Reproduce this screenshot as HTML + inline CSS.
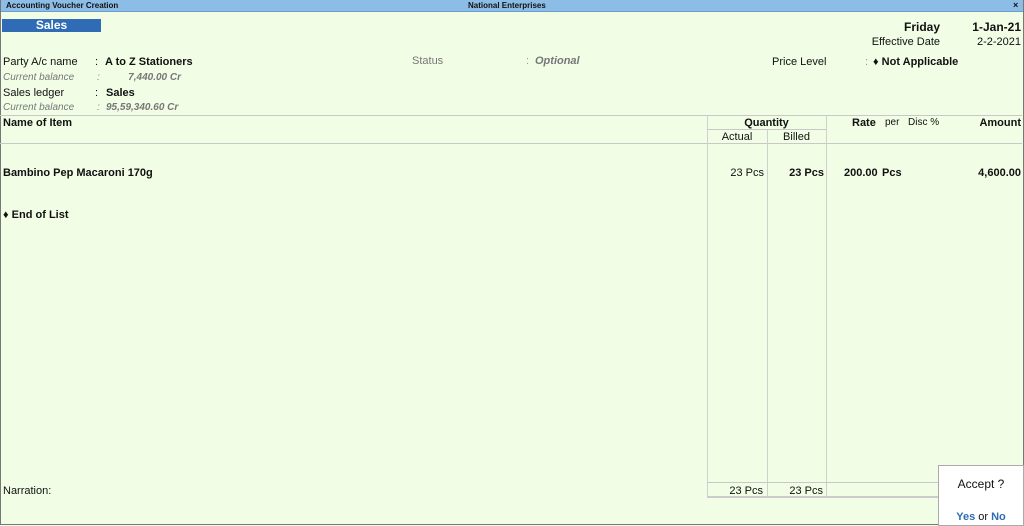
<!DOCTYPE html>
<html><head><style>
body{margin:0;width:1024px;height:526px;overflow:hidden;background:#f2fde6;font-family:"Liberation Sans",sans-serif;font-size:11px;color:#111;position:relative}
.a{position:absolute;white-space:nowrap}
.b{font-weight:bold}
.g{color:#777;font-style:italic}
.r{text-align:right}
.hl{position:absolute;height:1px;background:#c8c8c8}
.vl{position:absolute;width:1px;background:#d0d0d0}
</style></head><body>
<div class="a" style="left:0;top:0;width:1024px;height:11px;background:#8cbde6;border-bottom:1px solid #6a9ccc"></div>
<div class="a" style="left:0;top:0;width:1022px;height:524px;border:1px solid #777;border-top:none"></div>
<div class="a b" style="left:6px;top:0;font-size:8px;line-height:11px">Accounting Voucher Creation</div>
<div class="a b" style="left:468px;top:0;font-size:8px;line-height:11px">National Enterprises</div>
<div class="a b" style="left:1013px;top:0;font-size:9px;line-height:11px">×</div>
<div class="a b" style="left:2px;top:19px;width:99px;height:13px;background:#2f6cb5;color:#fff;text-align:center;font-size:12px;line-height:13px">Sales</div>
<div class="a b r" style="left:860px;top:20px;width:80px;font-size:12px">Friday</div>
<div class="a b r" style="left:960px;top:20px;width:61px;font-size:12px">1-Jan-21</div>
<div class="a r" style="left:860px;top:36px;width:80px">Effective Date</div>
<div class="a r" style="left:960px;top:36px;width:61px">2-2-2021</div>
<div class="a" style="left:3px;top:56px;font-size:11px">Party A/c name</div>
<div class="a" style="left:95px;top:56px">:</div>
<div class="a b" style="left:105px;top:56px">A to Z Stationers</div>
<div class="a g" style="left:3px;top:72px;font-size:10px">Current balance</div>
<div class="a g" style="left:97px;top:72px;font-size:10px">:</div>
<div class="a g b r" style="left:105px;top:72px;width:76px;font-size:10px">7,440.00 Cr</div>
<div class="a" style="left:3px;top:87px">Sales ledger</div>
<div class="a" style="left:95px;top:87px">:</div>
<div class="a b" style="left:106px;top:87px">Sales</div>
<div class="a g" style="left:3px;top:102px;font-size:10px">Current balance</div>
<div class="a g" style="left:97px;top:102px;font-size:10px">:</div>
<div class="a g b" style="left:106px;top:102px;font-size:10px">95,59,340.60 Cr</div>
<div class="a" style="left:412px;top:55px;color:#777">Status</div>
<div class="a" style="left:526px;top:55px;color:#999">:</div>
<div class="a b g" style="left:535px;top:55px">Optional</div>
<div class="a" style="left:772px;top:56px">Price Level</div>
<div class="a" style="left:865px;top:56px;color:#999">:</div>
<div class="a b" style="left:873px;top:56px">♦ Not Applicable</div>
<div class="hl" style="left:0;top:115px;width:1022px"></div>
<div class="hl" style="left:0;top:143px;width:1022px"></div>
<div class="hl" style="left:707px;top:129px;width:119px"></div>
<div class="vl" style="left:707px;top:115px;height:382px"></div>
<div class="vl" style="left:767px;top:129px;height:368px"></div>
<div class="vl" style="left:826px;top:115px;height:382px"></div>
<div class="hl" style="left:707px;top:482px;width:232px"></div>
<div class="hl" style="left:707px;top:496px;width:232px;height:2px;background:#ccc"></div>
<div class="a b" style="left:3px;top:117px">Name of Item</div>
<div class="a b" style="left:707px;top:117px;width:119px;text-align:center">Quantity</div>
<div class="a" style="left:707px;top:131px;width:60px;text-align:center">Actual</div>
<div class="a" style="left:767px;top:131px;width:59px;text-align:center">Billed</div>
<div class="a b" style="left:852px;top:117px">Rate</div>
<div class="a" style="left:885px;top:117px;font-size:10px">per</div>
<div class="a" style="left:908px;top:117px;font-size:10px">Disc %</div>
<div class="a b r" style="left:950px;top:117px;width:71px">Amount</div>
<div class="a b" style="left:3px;top:167px">Bambino Pep Macaroni 170g</div>
<div class="a r" style="left:707px;top:167px;width:57px">23 Pcs</div>
<div class="a b r" style="left:767px;top:167px;width:57px">23 Pcs</div>
<div class="a b" style="left:844px;top:167px">200.00</div>
<div class="a b" style="left:882px;top:167px">Pcs</div>
<div class="a b r" style="left:950px;top:167px;width:71px">4,600.00</div>
<div class="a b" style="left:3px;top:209px">♦ End of List</div>
<div class="a" style="left:3px;top:485px">Narration:</div>
<div class="a r" style="left:707px;top:485px;width:56px">23 Pcs</div>
<div class="a r" style="left:767px;top:485px;width:56px">23 Pcs</div>
<div class="a" style="left:938px;top:465px;width:86px;height:61px;background:#fff;border:1px solid #aaa;box-sizing:border-box"></div>
<div class="a" style="left:938px;top:477px;width:86px;text-align:center;font-size:12px">Accept ?</div>
<div class="a" style="left:938px;top:511px;width:86px;text-align:center;font-size:11px"><b style="color:#2f6cb5">Yes</b> or <b style="color:#2f6cb5">No</b></div>
</body></html>
